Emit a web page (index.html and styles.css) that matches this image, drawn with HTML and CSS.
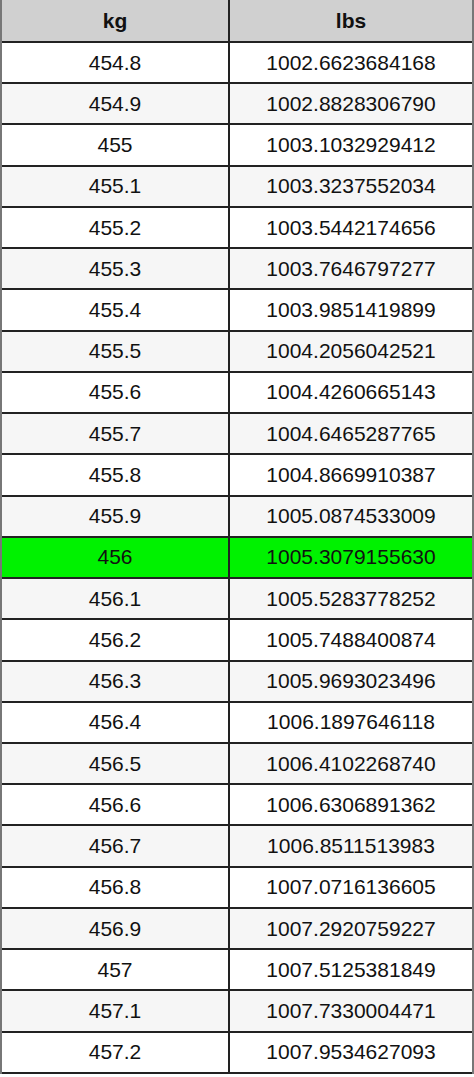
FILE: index.html
```html
<!DOCTYPE html>
<html>
<head>
<meta charset="utf-8">
<link rel="stylesheet" href="styles.css">
</head>
<body>
<div class="table">
  <div class="row head"><div class="cell">kg</div><div class="cell">lbs</div></div>
  <div class="row"><div class="cell">454.8</div><div class="cell">1002.6623684168</div></div>
  <div class="row alt"><div class="cell">454.9</div><div class="cell">1002.8828306790</div></div>
  <div class="row"><div class="cell">455</div><div class="cell">1003.1032929412</div></div>
  <div class="row alt"><div class="cell">455.1</div><div class="cell">1003.3237552034</div></div>
  <div class="row"><div class="cell">455.2</div><div class="cell">1003.5442174656</div></div>
  <div class="row alt"><div class="cell">455.3</div><div class="cell">1003.7646797277</div></div>
  <div class="row"><div class="cell">455.4</div><div class="cell">1003.9851419899</div></div>
  <div class="row alt"><div class="cell">455.5</div><div class="cell">1004.2056042521</div></div>
  <div class="row"><div class="cell">455.6</div><div class="cell">1004.4260665143</div></div>
  <div class="row alt"><div class="cell">455.7</div><div class="cell">1004.6465287765</div></div>
  <div class="row"><div class="cell">455.8</div><div class="cell">1004.8669910387</div></div>
  <div class="row alt"><div class="cell">455.9</div><div class="cell">1005.0874533009</div></div>
  <div class="row hl"><div class="cell">456</div><div class="cell">1005.3079155630</div></div>
  <div class="row alt"><div class="cell">456.1</div><div class="cell">1005.5283778252</div></div>
  <div class="row"><div class="cell">456.2</div><div class="cell">1005.7488400874</div></div>
  <div class="row alt"><div class="cell">456.3</div><div class="cell">1005.9693023496</div></div>
  <div class="row"><div class="cell">456.4</div><div class="cell">1006.1897646118</div></div>
  <div class="row alt"><div class="cell">456.5</div><div class="cell">1006.4102268740</div></div>
  <div class="row"><div class="cell">456.6</div><div class="cell">1006.6306891362</div></div>
  <div class="row alt"><div class="cell">456.7</div><div class="cell">1006.8511513983</div></div>
  <div class="row"><div class="cell">456.8</div><div class="cell">1007.0716136605</div></div>
  <div class="row alt"><div class="cell">456.9</div><div class="cell">1007.2920759227</div></div>
  <div class="row"><div class="cell">457</div><div class="cell">1007.5125381849</div></div>
  <div class="row alt"><div class="cell">457.1</div><div class="cell">1007.7330004471</div></div>
  <div class="row"><div class="cell">457.2</div><div class="cell">1007.9534627093</div></div>
</div>
</body>
</html>
```
FILE: styles.css
```css
html, body {
  margin: 0;
  padding: 0;
  background: #ffffff;
}
body {
  font-family: "Liberation Sans", Arial, sans-serif;
  color: #111111;
}
.table {
  width: 474px;
  box-sizing: border-box;
  border-left: 2px solid #777777;
  border-right: 2px solid #777777;
}
.row {
  display: grid;
  grid-template-columns: 228px 242px;
  height: 41.24px;
  background: #ffffff;
}
.row.alt {
  background: #f6f6f6;
}
.row.hl {
  background: #00f200;
}
.row.head {
  height: 43px;
  background: #d0d0d0;
  font-weight: bold;
}
.cell {
  box-sizing: border-box;
  display: flex;
  align-items: center;
  justify-content: center;
  font-size: 21px;
  border-bottom: 2px solid #222222;
}
.cell:first-child {
  border-right: 2px solid #222222;
}
```
